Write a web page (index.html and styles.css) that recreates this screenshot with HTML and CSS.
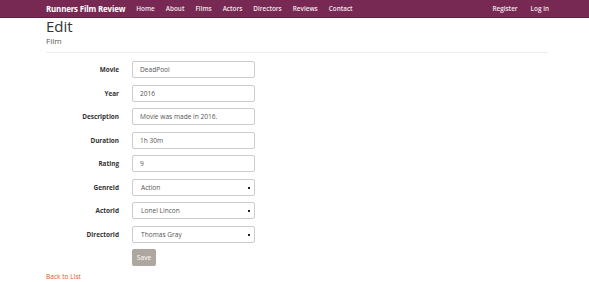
FILE: index.html
```html
<!DOCTYPE html>
<html>
<head>
<meta charset="utf-8">
<link rel="stylesheet" href="styles.css">
</head>
<body>
<nav class="navbar">
  <div class="nav-inner">
    <a class="brand">Runners Film Review</a>
    <ul class="nav-links">
      <li>Home</li><li>About</li><li>Films</li><li>Actors</li><li>Directors</li><li>Reviews</li><li>Contact</li>
    </ul>
    <ul class="nav-right">
      <li>Register</li><li>Log in</li>
    </ul>
  </div>
</nav>
<main class="container">
  <h2 class="title">Edit</h2>
  <h4 class="subtitle">Film</h4>
  <hr class="rule">
  <form class="form">
    <label class="lbl">Movie</label><div class="ctl">DeadPool</div>
    <label class="lbl">Year</label><div class="ctl">2016</div>
    <label class="lbl">Description</label><div class="ctl">Movie was made in 2016.</div>
    <label class="lbl">Duration</label><div class="ctl">1h 30m</div>
    <label class="lbl">Rating</label><div class="ctl">9</div>
    <label class="lbl">GenreId</label><div class="ctl sel">Action<span class="arrow"></span></div>
    <label class="lbl">ActorId</label><div class="ctl sel">Lonel Lincon<span class="arrow"></span></div>
    <label class="lbl">DirectorId</label><div class="ctl sel">Thomas Gray<span class="arrow"></span></div>
    <span></span><div class="actions"><span class="btn">Save</span></div>
  </form>
  <a class="back">Back to List</a>
</main>
</body>
</html>
```
FILE: styles.css
```css
* { box-sizing: border-box; }
body {
  margin: 0;
  font-family: "Open Sans", "DejaVu Sans", sans-serif;
  color: #333;
  background: #fff;
}
.navbar {
  height: 18px;
  background: #772953;
  border-bottom: 1px solid #5f2042;
}
.nav-inner {
  display: flex;
  align-items: center;
  height: 17px;
  padding: 0 40px 0 46px;
}
.brand {
  color: #fff;
  font-weight: 700;
  font-size: 7.9px;
  letter-spacing: -0.15px;
  margin-right: 11px;
}
.nav-links, .nav-right {
  list-style: none;
  margin: 0;
  padding: 0;
  display: flex;
  gap: 11px;
  font-size: 6.4px;
  font-weight: 600;
  color: #f3e8ee;
}
.nav-right { margin-left: auto; gap: 13px; }
.container {
  padding: 0 41px 0 46px;
}
.title {
  margin: 0;
  font-weight: 400;
  font-size: 15px;
  line-height: 17px;
}
.subtitle {
  margin: 0;
  font-size: 8px;
  font-weight: 400;
  line-height: 10px;
  margin-top: 1px;
  color: #555;
}
.rule {
  border: 0;
  border-top: 1px solid #eee;
  margin: 6px 0 0;
}
.form {
  display: grid;
  grid-template-columns: 73px 123px;
  grid-auto-rows: 17px;
  column-gap: 13px;
  row-gap: 6.5px;
  margin-top: 8px;
  align-items: center;
}
.lbl {
  text-align: right;
  font-weight: 700;
  font-size: 6.4px;
  color: #333;
}
.ctl {
  height: 17px;
  border: 1px solid #ccc;
  border-radius: 2px;
  font-size: 6.6px;
  color: #555;
  padding: 0 7px;
  display: flex;
  align-items: center;
  position: relative;
}
.sel { padding-left: 8px; }
.arrow {
  position: absolute;
  right: 4px;
  top: 7px;
  width: 2px;
  height: 2px;
  background: #222;
}
.actions { height: 17px; display: flex; }
.btn {
  display: flex;
  align-items: center;
  justify-content: center;
  width: 24px;
  height: 17px;
  background: #aea79f;
  color: #fff;
  font-size: 6.6px;
  border-radius: 2px;
}
.back {
  display: block;
  margin-top: 6px;
  color: #e95420;
  font-size: 6.6px;
  line-height: 9px;
}
```
